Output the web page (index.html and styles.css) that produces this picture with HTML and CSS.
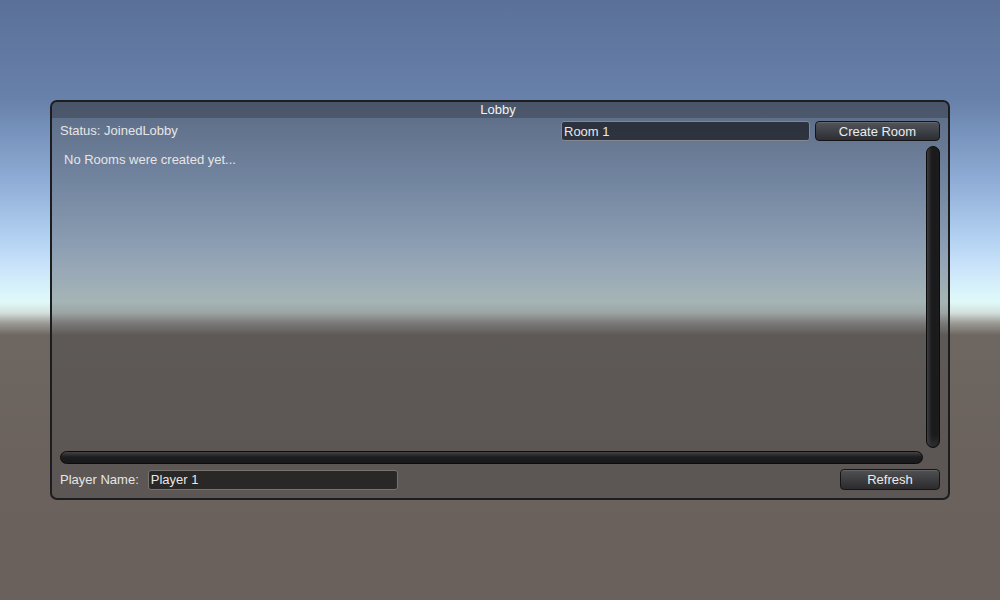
FILE: index.html
```html
<!DOCTYPE html>
<html lang="en">
<head>
  <meta charset="UTF-8" />
  <meta name="viewport" content="width=device-width, initial-scale=1.0"/>
  <title>Lobby</title>
  <link rel="stylesheet" href="styles.css">
</head>
<body>
  <div class="window">
    <div class="title-bar">Lobby</div>
    <div class="window-body">
      <div class="row top-row">
        <span class="label status">Status: JoinedLobby</span>
        <input class="field room-field" type="text" value="Room 1">
        <button class="btn create-btn">Create Room</button>
      </div>

      <div class="scroll-view">
        <div class="room-list">
          <p class="empty">No Rooms were created yet...</p>
        </div>
        <div class="vbar"></div>
        <div class="hbar"></div>
      </div>

      <div class="row bottom-row">
        <span class="label">Player Name:</span>
        <input class="field name-field" type="text" value="Player 1">
        <span class="spacer"></span>
        <button class="btn refresh-btn">Refresh</button>
      </div>
    </div>
  </div>
</body>
</html>
```

FILE: styles.css
```css
html, body {
  margin: 0;
  height: 600px;
  overflow: hidden;
}
body {
  font-family: 'Liberation Sans', Arial, sans-serif;
  font-size: 13px;
  color: #e6e6e6;
  padding-top: 100px;
  box-sizing: border-box;
  /* skybox: blue sky, bright horizon, brown ground */
  background: linear-gradient(to bottom,
    #5a7098 0px,
    #6881ab 100px,
    #8eacd5 180px,
    #b4d2f2 240px,
    #cde7fb 272px,
    #e0faf9 302px,
    #d2dfdb 313px,
    #9d9b96 323px,
    #6e6761 335px,
    #6b625d 450px,
    #6b615c 600px);
}
.window {
  margin-left: 50px;
  width: 900px;
  height: 400px;
  box-sizing: border-box;
  border: 2px solid #1c1d1f;
  border-radius: 7px;
  background: rgba(68, 68, 70, 0.38);
  display: flex;
  flex-direction: column;
  overflow: hidden;
}
.title-bar {
  height: 16px;
  line-height: 16px;
  text-align: center;
  color: #f2f2f2;
  background: rgba(30, 30, 34, 0.28);
  padding-right: 4px;
}
.window-body {
  flex: 1;
  display: flex;
  flex-direction: column;
  padding: 3px 8px 8px 8px;
  gap: 4px;
}
.row {
  display: flex;
  align-items: center;
  height: 20px;
}
.top-row .label {
  margin-top: -1px;
}
.bottom-row {
  height: 21px;
  margin-top: 1px;
}
.label {
  white-space: nowrap;
}
.status {
  flex: 1;
}
.field {
  font: inherit;
  color: #e8e8e8;
  height: 20px;
  box-sizing: border-box;
  padding: 0 2px;
  border: 1px solid #85898f;
  border-radius: 3px;
  background: rgba(8, 8, 10, 0.6);
  outline: none;
}
.room-field {
  width: 249px;
}
.name-field {
  width: 250px;
  margin-left: 9px;
  border-color: #77736f;
}
.spacer {
  flex: 1;
}
.btn {
  font: inherit;
  color: #ececec;
  height: 20px;
  padding: 0;
  border: 1px solid #151517;
  border-radius: 4px;
  background: linear-gradient(to bottom, rgba(78, 80, 84, 0.85), rgba(38, 38, 40, 0.9));
  box-shadow: inset 0 1px 0 rgba(255, 255, 255, 0.12);
}
.create-btn {
  width: 125px;
  margin-left: 5px;
}
.refresh-btn {
  width: 100px;
  height: 21px;
}
.scroll-view {
  flex: 1;
  display: grid;
  grid-template-columns: 1fr 14px;
  grid-template-rows: 1fr 13px;
  column-gap: 3px;
  row-gap: 3px;
}
.room-list {
  padding: 7px 4px;
}
.empty {
  margin: 0;
}
.vbar {
  grid-row: 1;
  grid-column: 2;
  margin-top: 1px;
  border: 1px solid #0c0c0d;
  border-radius: 7px;
  background: linear-gradient(to right, #3b3b3d, #1d1d1f 35%, #141415);
  box-shadow: inset 0 -6px 6px rgba(80, 80, 80, 0.35);
}
.hbar {
  grid-row: 2;
  grid-column: 1;
  border: 1px solid #0c0c0d;
  border-radius: 7px;
  background: linear-gradient(to bottom, #434345, #1d1d1f 45%, #18181a);
}
```
